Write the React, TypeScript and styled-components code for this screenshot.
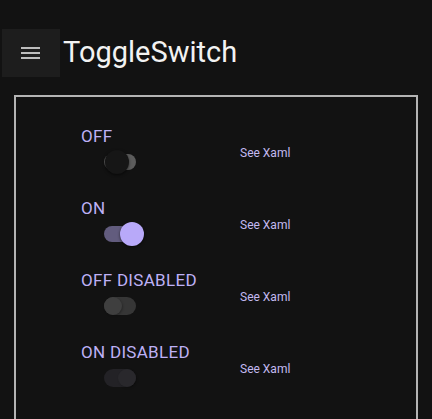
import React from "react";
import styled, { createGlobalStyle } from "styled-components";

const GlobalStyle = createGlobalStyle`
  body {
    margin: 0;
    background: #121212;
    font-family: Roboto, "Noto Sans", sans-serif;
    overflow: hidden;
  }
`;

const Page = styled.div`
  width: 432px;
  height: 419px;
  background: #121212;
  overflow: hidden;
`;

const Header = styled.div`
  display: flex;
  align-items: center;
  padding-top: 29px;
  padding-left: 2px;
`;

const MenuButton = styled.div`
  width: 58px;
  height: 48px;
  background: #1d1d1d;
  display: flex;
  align-items: center;
  justify-content: center;
`;

const Title = styled.div`
  margin-left: 3px;
  font-size: 29px;
  color: #f2f2f2;
  line-height: 48px;
  margin-top: -2px;
`;

const Panel = styled.div`
  margin: 18px 0 0 14px;
  width: 404px;
  height: 400px;
  border: 2px solid #b4b4b4;
  border-bottom: none;
  padding: 28px 0 0 65px;
  box-sizing: border-box;
`;

const Row = styled.div`
  display: grid;
  grid-template-columns: 159px auto;
  align-items: center;
  margin-bottom: 20px;
`;

const LeftCol = styled.div`
  display: flex;
  flex-direction: column;
`;

const Label = styled.div`
  font-size: 17px;
  line-height: 22px;
  color: #beb1f6;
  letter-spacing: 0.3px;
`;

const SeeXaml = styled.div`
  font-size: 12px;
  color: #c3baf0;
  margin-top: 3px;
`;

const SwitchWrap = styled.div`
  position: relative;
  margin-left: 23px;
  width: 34px;
  height: 30px;
`;

const Track = styled.div<{ $color: string; $disabled: boolean }>`
  position: absolute;
  left: 0;
  top: ${(p) => (p.$disabled ? "6px" : "7px")};
  width: 32px;
  height: ${(p) => (p.$disabled ? "18px" : "16px")};
  border-radius: 9px;
  background: ${(p) => p.$color};
`;

const Thumb = styled.div<{ $on: boolean; $color: string; $disabled: boolean }>`
  position: absolute;
  top: ${(p) => (p.$disabled ? "6px" : "3px")};
  left: ${(p) => (p.$on ? (p.$disabled ? "14px" : "16px") : p.$disabled ? "0" : "1px")};
  width: ${(p) => (p.$disabled ? "18px" : "24px")};
  height: ${(p) => (p.$disabled ? "18px" : "24px")};
  border-radius: 50%;
  background: ${(p) => p.$color};
  box-shadow: ${(p) =>
    p.$disabled ? "1px 1px 2px rgba(0,0,0,0.25)" : "0 1px 3px rgba(0,0,0,0.6)"};
`;

type SwitchProps = {
  on: boolean;
  track: string;
  thumb: string;
  disabled?: boolean;
};

const ToggleSwitch = ({ on, track, thumb, disabled = false }: SwitchProps) => (
  <SwitchWrap>
    <Track $color={track} $disabled={disabled} />
    <Thumb $on={on} $color={thumb} $disabled={disabled} />
  </SwitchWrap>
);

const rows: Array<{ label: string } & SwitchProps> = [
  { label: "OFF", on: false, track: "#5c5c5c", thumb: "#161616" },
  { label: "ON", on: true, track: "#625c7e", thumb: "#b8a9f9" },
  {
    label: "OFF DISABLED",
    on: false,
    track: "#363636",
    thumb: "#3f3f3f",
    disabled: true,
  },
  {
    label: "ON DISABLED",
    on: true,
    track: "#232226",
    thumb: "#29282c",
    disabled: true,
  },
];

const MenuIcon = () => (
  <svg width="20" height="14" viewBox="0 0 20 14">
    <rect x="0" y="1" width="19" height="2" fill="#bdbdbd" />
    <rect x="0" y="6" width="19" height="2" fill="#bdbdbd" />
    <rect x="0" y="11" width="19" height="2" fill="#bdbdbd" />
  </svg>
);

const App = () => (
  <Page>
    <GlobalStyle />
    <Header>
      <MenuButton>
        <MenuIcon />
      </MenuButton>
      <Title>ToggleSwitch</Title>
    </Header>
    <Panel>
      {rows.map(({ label, ...sw }) => (
        <Row key={label}>
          <LeftCol>
            <Label>{label}</Label>
            <ToggleSwitch {...sw} />
          </LeftCol>
          <SeeXaml>See Xaml</SeeXaml>
        </Row>
      ))}
    </Panel>
  </Page>
);

export default App;
